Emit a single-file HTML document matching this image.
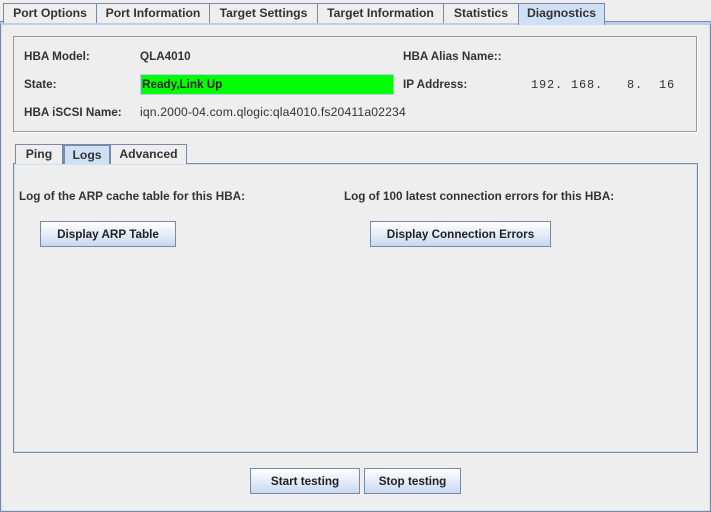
<!DOCTYPE html>
<html><head><style>
body{margin:0;width:711px;height:512px;background:#eeeeee;font-family:"Liberation Sans",sans-serif;font-size:11.7px;font-weight:bold;color:#333;position:relative;overflow:hidden}
div{position:absolute;box-sizing:border-box;white-space:nowrap}
.tab{top:3px;height:20px;border:1px solid #7a8aa6;border-bottom:none;background:#eeeeee;text-align:center;line-height:18px;font-size:12.2px}
.sel{background:#cfe0f5}
.btn{border:1px solid #7a8aa6;background:linear-gradient(#ffffff,#dfe9f7 60%,#c6d7ef);text-align:center;font-size:11.7px;color:#222}
.mono{font-family:"Liberation Mono",monospace;font-weight:normal;font-size:12px;letter-spacing:0.8px}
</style></head><body>
<div style="left:0;top:22px;width:711px;height:490px;border:1px solid #7a8aa6;border-top:3px solid #b9cfea;box-shadow:inset 1px 0 0 #cfe0f5, inset -1px -1px 0 #cfe0f5"></div>
<div style="left:0;top:21px;width:711px;height:1px;background:#7a8aa6"></div>
<div class="tab" style="left:3px;width:94px">Port Options</div>
<div class="tab" style="left:96px;width:114px">Port Information</div>
<div class="tab" style="left:209px;width:109px">Target Settings</div>
<div class="tab" style="left:317px;width:127px">Target Information</div>
<div class="tab" style="left:443px;width:76px">Statistics</div>
<div class="tab sel" style="left:518px;width:87px;height:22px">Diagnostics</div>

<div style="left:13px;top:36px;width:684px;height:96px;border:1px solid #999;box-shadow:1px 1px 0 #fff"></div>
<div style="left:24px;top:50px">HBA Model:</div>
<div style="left:140px;top:50px">QLA4010</div>
<div style="left:403px;top:50px">HBA Alias Name::</div>
<div style="left:24px;top:78px">State:</div>
<div style="left:140px;top:74px;width:254px;height:21px;background:#00ff00;border:1px solid #b9cfea;line-height:19px;padding-left:1px;color:#222">Ready,Link Up</div>
<div style="left:403px;top:78px">IP Address:</div>
<div class="mono" style="left:531px;top:78px;white-space:pre">192. 168.   8.  16</div>
<div style="left:24px;top:106px">HBA iSCSI Name:</div>
<div style="left:140px;top:105px;font-weight:normal;font-size:12.2px;letter-spacing:0.15px">iqn.2000-04.com.qlogic:qla4010.fs20411a02234</div>

<div style="left:13px;top:163px;width:685px;height:290px;border:1px solid #7a8aa6;box-shadow:inset 1px 1px 0 #cfe0f5,inset -1px -1px 0 #cfe0f5"></div>
<div class="tab" style="left:15px;top:144px;width:48px">Ping</div>
<div class="tab sel" style="left:63px;top:144px;width:48px;height:20px;border:2px solid #7a8aa6;border-bottom:none">Logs</div>
<div class="tab" style="left:110px;top:144px;width:77px">Advanced</div>

<div style="left:19px;top:190px">Log of the ARP cache table for this HBA:</div>
<div style="left:344px;top:190px">Log of 100 latest connection errors for this HBA:</div>
<div class="btn" style="left:40px;top:221px;width:136px;height:26px;line-height:25px">Display ARP Table</div>
<div class="btn" style="left:370px;top:221px;width:181px;height:26px;line-height:25px">Display Connection Errors</div>
<div class="btn" style="left:250px;top:468px;width:110px;height:26px;line-height:25px">Start testing</div>
<div class="btn" style="left:364px;top:468px;width:97px;height:26px;line-height:25px">Stop testing</div>
</body></html>
